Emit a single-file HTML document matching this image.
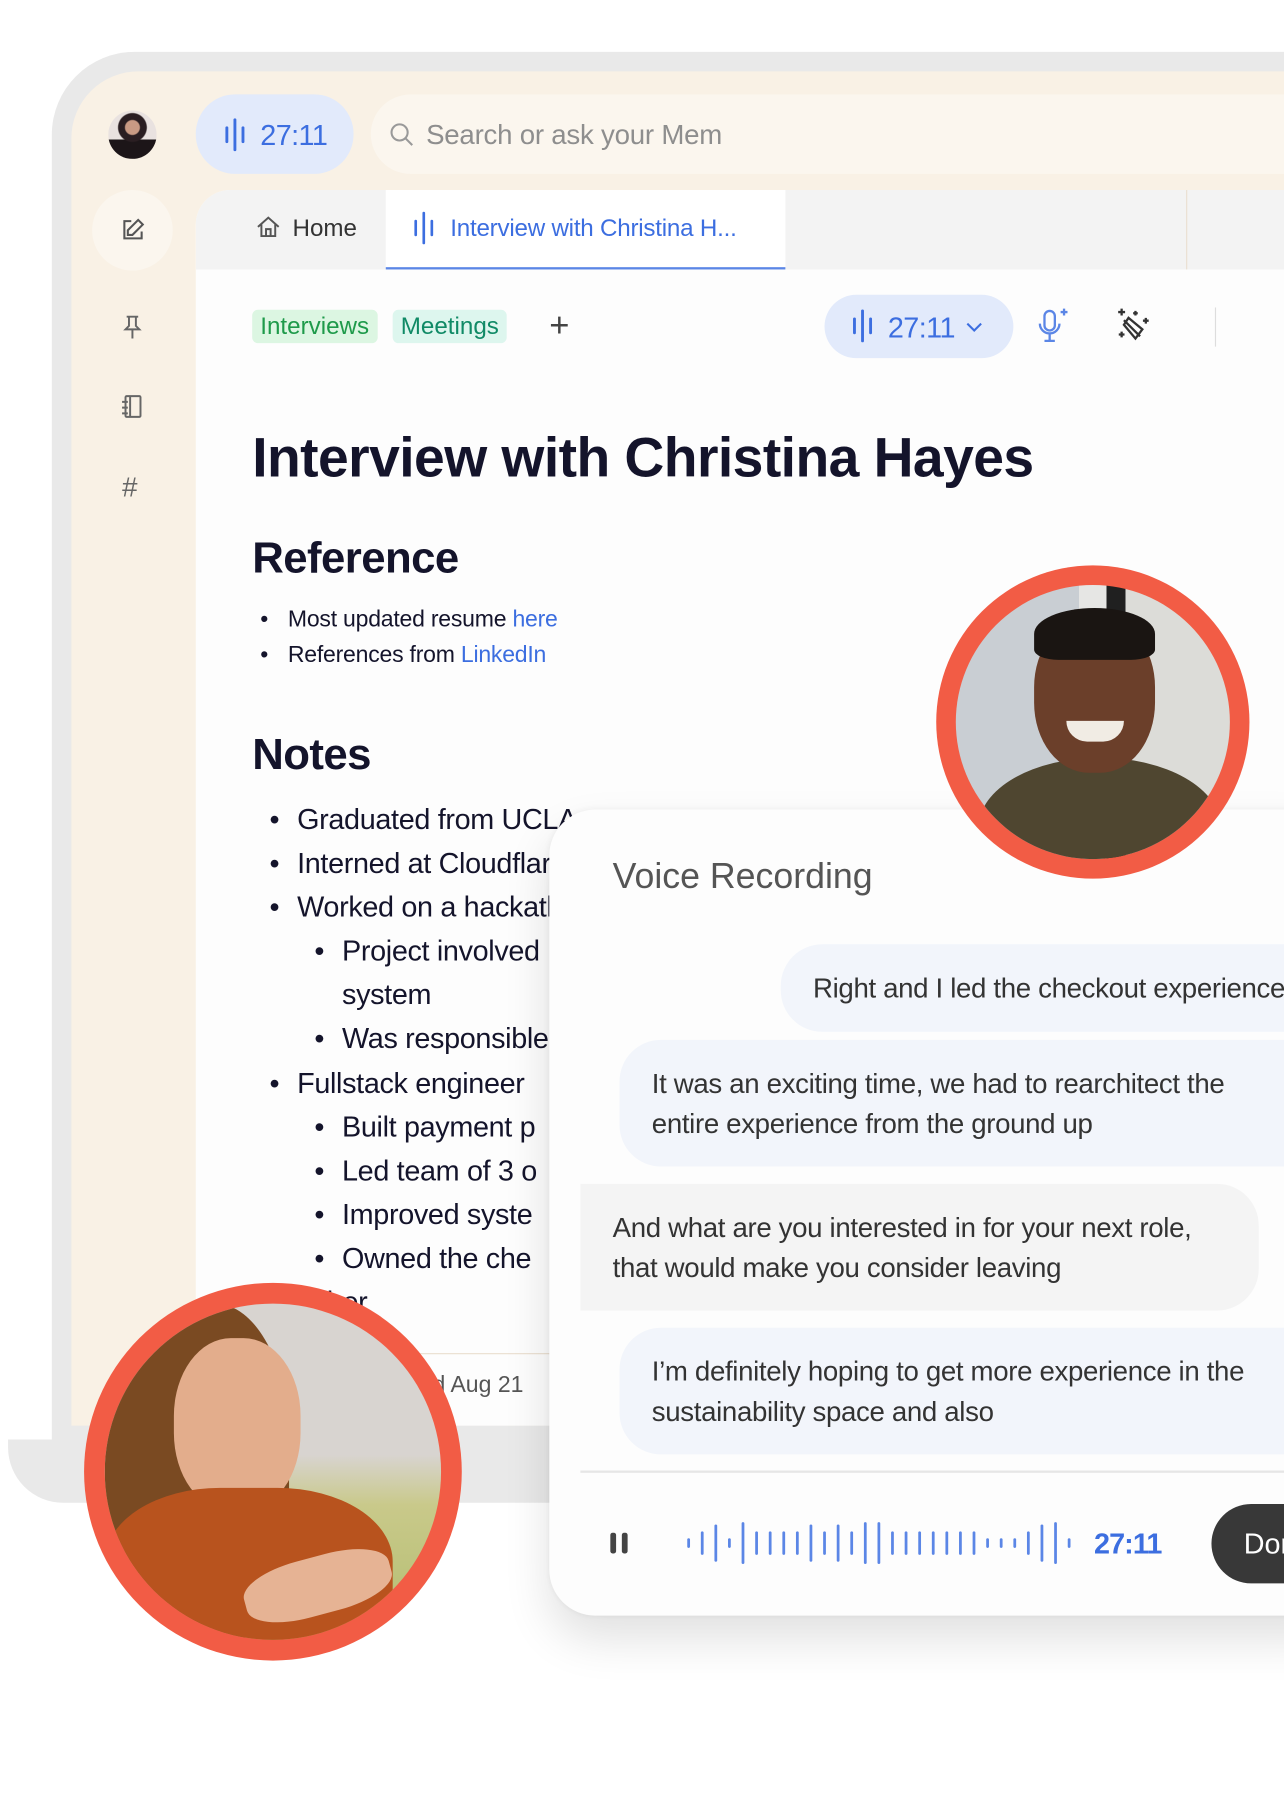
<!DOCTYPE html>
<html><head><meta charset="utf-8"><style>
*{box-sizing:border-box;margin:0;padding:0}
html,body{width:1284px;height:1806px;overflow:hidden;background:#fff}
body{font-family:"Liberation Sans",sans-serif}
#w{position:absolute;left:0;top:0;width:1115px;height:1568px;transform:scale(1.15157);transform-origin:0 0;overflow:hidden}
.a{position:absolute}
.t{white-space:nowrap;position:absolute}
.pill{background:#e2eafb;border-radius:34px}
.blue{color:#3c6ee0}
.b{position:absolute;white-space:nowrap;color:#14142b}
.b:before{content:"•";position:absolute;left:-24px}
.bub{position:absolute;border-radius:36px;font-size:24px;color:#333;line-height:35px;padding:21px 28px 19px;letter-spacing:-0.3px}
</style></head><body><div id="w">
<div class="a" style="left:45px;top:45px;width:1200px;height:1215px;background:#e9e9e9;border-radius:72px 0 0 0"></div>
<div class="a" style="left:7px;top:1250px;width:480px;height:55px;background:#e9e9e9;border-radius:0 0 0 48px"></div>
<div class="a" style="left:62px;top:62px;width:1200px;height:1176px;background:#f9f1e5;border-radius:58px 0 0 0"></div>
<div class="a" style="left:94px;top:96px;width:42px;height:42px;border-radius:50%;background:radial-gradient(circle at 50% 35%,#c99a84 0 6px,#2a1e22 7px 12px,transparent 13px),linear-gradient(#e9e2e0 60%,#1c1518 60%);"></div>
<div class="a pill" style="left:170px;top:82px;width:137px;height:69px"></div>
<svg class="a" style="left:194px;top:102px" width="22" height="30"><g stroke="#3c6ee0" stroke-width="2.5" stroke-linecap="round"><line x1="3" y1="9" x2="3" y2="21"/><line x1="10" y1="2" x2="10" y2="28"/><line x1="17" y1="9" x2="17" y2="21"/></g></svg>
<div class="t blue" style="left:226px;top:104px;font-size:25px;letter-spacing:-0.5px">27:11</div>
<div class="a" style="left:322px;top:82px;width:900px;height:69px;background:#fbf6ee;border-radius:35px"></div>
<svg class="a" style="left:338px;top:106px" width="22" height="22"><circle cx="9" cy="9" r="7" fill="none" stroke="#999" stroke-width="1.8"/><line x1="14" y1="14" x2="20" y2="20" stroke="#999" stroke-width="1.8"/></svg>
<div class="t" style="left:370px;top:104px;font-size:24px;color:#8e8e8e;letter-spacing:-0.2px">Search or ask your Mem</div>
<div class="a" style="left:80px;top:165px;width:70px;height:70px;border-radius:50%;background:#fbf6ee"></div>
<svg class="a" style="left:104px;top:189px" width="22" height="22" fill="none" stroke="#555" stroke-width="1.8"><path d="M10 3H4v15h15v-6"/><path d="M16 2l4 4-9 9H7v-4z"/></svg>
<svg class="a" style="left:105px;top:273px" width="20" height="22" fill="none" stroke="#666" stroke-width="1.7"><path d="M5 2h10M7 2v8l-3 3h12l-3-3V2M10 13v8"/></svg>
<svg class="a" style="left:104px;top:342px" width="22" height="22" fill="none" stroke="#666" stroke-width="1.7"><rect x="5" y="2" width="13" height="18" rx="1"/><path d="M9 2v18M2 7h5M2 12h5M2 17h5"/></svg>
<div class="t" style="left:106px;top:410px;font-size:24px;color:#666">#</div>
<div class="a" style="left:170px;top:165px;width:1000px;height:1073px;background:#fdfdfd;border-radius:30px 0 0 0;overflow:hidden">
 <div class="a" style="left:0;top:0;width:1000px;height:69px;background:#f3f3f3"></div>
 <div class="a" style="left:165px;top:0;width:347px;height:69px;background:#fff;border-bottom:2px solid #5b86e6"></div>
 <div class="a" style="left:860px;top:0;width:1px;height:69px;background:#eadfd0"></div>
</div>
<svg class="a" style="left:222px;top:187px" width="22" height="20" fill="none" stroke="#555" stroke-width="1.7"><path d="M2 10L11 2l9 8M5 8v10h12V8M9 18v-6h4v6"/></svg>
<div class="t" style="left:254px;top:187px;font-size:21px;color:#333">Home</div>
<svg class="a" style="left:358px;top:183px" width="22" height="30"><g stroke="#3c6ee0" stroke-width="2.3" stroke-linecap="round"><line x1="3" y1="9" x2="3" y2="21"/><line x1="10" y1="2" x2="10" y2="28"/><line x1="17" y1="9" x2="17" y2="21"/></g></svg>
<div class="t blue" style="left:391px;top:187px;font-size:21px;letter-spacing:-0.2px">Interview with Christina H...</div>
<div class="t" style="left:219px;top:269px;height:29px;padding:3px 7px;background:#dcf6e2;color:#1e9a4a;font-size:21px;border-radius:5px">Interviews</div>
<div class="t" style="left:341px;top:269px;height:29px;padding:3px 7px;background:#ddf6ee;color:#108a66;font-size:21px;border-radius:5px">Meetings</div>
<div class="t" style="left:477px;top:266px;font-size:30px;color:#444">+</div>
<div class="a pill" style="left:716px;top:256px;width:164px;height:55px"></div>
<svg class="a" style="left:739px;top:268px" width="22" height="30"><g stroke="#3c6ee0" stroke-width="2.5" stroke-linecap="round"><line x1="3" y1="9" x2="3" y2="21"/><line x1="10" y1="2" x2="10" y2="28"/><line x1="17" y1="9" x2="17" y2="21"/></g></svg>
<div class="t blue" style="left:771px;top:271px;font-size:25px;letter-spacing:-0.5px">27:11</div>
<svg class="a" style="left:838px;top:278px" width="16" height="12" fill="none" stroke="#3c6ee0" stroke-width="1.8"><path d="M2 3l6 6 6-6"/></svg>
<svg class="a" style="left:899px;top:266px" width="30" height="34" fill="none" stroke="#5b86e6" stroke-width="2"><rect x="8" y="4" width="9" height="17" rx="4.5"/><path d="M4 15a8.5 8.5 0 0 0 17 0M12.5 24v6M8 30h9M25 2v6M22 5h6"/></svg>
<svg class="a" style="left:968px;top:266px" width="34" height="34" fill="none" stroke="#333" stroke-width="2"><path d="M8 12l14 14M12 10l12 10-6 8-10-12z"/><path d="M6 2v6M3 5h6M18 4v4M16 6h4M27 10v5M24.5 12.5h5M6 22v5M3.5 24.5h5"/></svg>
<div class="a" style="left:1055px;top:267px;width:1px;height:34px;background:#ddd"></div>
<div class="t" style="left:219px;top:371px;font-size:48px;font-weight:bold;color:#14142b;letter-spacing:-0.5px">Interview with Christina Hayes</div>
<div class="t" style="left:219px;top:464px;font-size:38px;font-weight:bold;color:#14142b;letter-spacing:-0.5px">Reference</div>
<div style="font-size:20px;letter-spacing:-0.2px">
<div class="b" style="left:250px;top:527px;">Most updated resume <span class="blue">here</span></div>
<div class="b" style="left:250px;top:558px;">References from <span class="blue">LinkedIn</span></div>
</div>
<div class="t" style="left:219px;top:635px;font-size:38px;font-weight:bold;color:#14142b;letter-spacing:-0.5px">Notes</div>
<div style="font-size:25px;letter-spacing:-0.3px">
<div class="b" style="left:258px;top:698px">Graduated from UCLA</div>
<div class="b" style="left:258px;top:736px">Interned at Cloudflare</div>
<div class="b" style="left:258px;top:774px">Worked on a hackathon</div>
<div class="b" style="left:297px;top:812px">Project involved</div>
<div class="t" style="left:297px;top:850px;color:#14142b">system</div>
<div class="b" style="left:297px;top:888px">Was responsible</div>
<div class="b" style="left:258px;top:927px">Fullstack engineer</div>
<div class="b" style="left:297px;top:965px">Built payment p</div>
<div class="b" style="left:297px;top:1003px">Led team of 3 o</div>
<div class="b" style="left:297px;top:1041px">Improved syste</div>
<div class="b" style="left:297px;top:1079px">Owned the che</div>
<div class="t" style="left:258px;top:1117px;color:#14142b">Other</div>
</div>
<div class="a" style="left:219px;top:1175px;width:260px;height:1px;background:#eadfd0"></div>
<div class="t" style="left:330px;top:1192px;font-size:20px;color:#555">Edited Aug 21</div>
<div class="a" style="left:477px;top:703px;width:700px;height:700px;background:#fdfdfd;border-radius:40px;box-shadow:0 20px 40px rgba(0,0,0,.12),0 0 6px rgba(0,0,0,.06)"></div>
<div class="t" style="left:532px;top:743px;font-size:31px;color:#555">Voice Recording</div>
<div class="bub" style="left:678px;top:820px;width:500px;height:76px;background:#f2f5fb;white-space:nowrap">Right and I led the checkout experience</div>
<div class="bub" style="left:538px;top:903px;width:640px;height:110px;background:#f2f5fb;padding-right:80px">It was an exciting time, we had to rearchitect the entire experience from the ground up</div>
<div class="bub" style="left:504px;top:1028px;width:589px;height:110px;background:#f4f4f4;border-radius:0 36px 36px 0">And what are you interested in for your next role, that would make you consider leaving</div>
<div class="bub" style="left:538px;top:1153px;width:640px;height:110px;background:#f2f5fb;white-space:nowrap">I’m definitely hoping to get more experience in the<br>sustainability space and also</div>
<div class="a" style="left:504px;top:1277px;width:620px;height:2px;background:#e6e6e6"></div>
<div class="a" style="left:530px;top:1331px;width:5px;height:18px;background:#444;border-radius:2px"></div>
<div class="a" style="left:540px;top:1331px;width:5px;height:18px;background:#444;border-radius:2px"></div>
<svg class="a" style="left:595px;top:1320px" width="345" height="40"><g stroke="#5b86e6" stroke-width="2.4" stroke-linecap="round" id="wv"></g></svg>
<div class="t" style="left:950px;top:1327px;font-size:25px;font-weight:bold;color:#3c6ee0;letter-spacing:-0.8px">27:11</div>
<div class="a" style="left:1052px;top:1306px;width:120px;height:69px;background:#383838;border-radius:35px"></div>
<div class="t" style="left:1080px;top:1327px;font-size:25px;color:#fff">Done</div>
<div class="a" style="left:813px;top:491px;width:272px;height:272px;border-radius:50%;background:#f25c45;padding:17px">
 <div style="width:100%;height:100%;border-radius:50%;overflow:hidden;position:relative;background:linear-gradient(90deg,#c9ced3 0 45%,#e6e6e4 45% 55%,#202020 55% 62%,#dcdcd8 62%)">
  <div class="a" style="left:20px;top:150px;width:210px;height:120px;border-radius:50% 50% 0 0;background:#4f4630"></div>
  <div class="a" style="left:68px;top:28px;width:105px;height:135px;border-radius:45%;background:#6b3f2a"></div>
  <div class="a" style="left:68px;top:20px;width:105px;height:45px;border-radius:50% 50% 20% 20%;background:#1a1512"></div>
  <div class="a" style="left:96px;top:118px;width:50px;height:18px;border-radius:0 0 25px 25px;background:#f1ece4"></div>
 </div>
</div>
<div class="a" style="left:73px;top:1114px;width:328px;height:328px;border-radius:50%;background:#f25c45;padding:18px">
 <div style="width:100%;height:100%;border-radius:50%;overflow:hidden;position:relative;background:linear-gradient(180deg,#d8d4d0 0 45%,#c9c98a 60%,#b2bd70)">
  <div class="a" style="left:0;top:0;width:160px;height:300px;background:#7a4a22;border-radius:0 40% 40% 0"></div>
  <div class="a" style="left:60px;top:30px;width:110px;height:150px;border-radius:45%;background:#e3ad8c"></div>
  <div class="a" style="left:0;top:160px;width:250px;height:160px;border-radius:40% 40% 0 0;background:#b8531e"></div>
  <div class="a" style="left:120px;top:220px;width:130px;height:50px;border-radius:40%;background:#e6b394;transform:rotate(-15deg)"></div>
 </div>
</div>
</div>
<script>
var h=[6,18,30,6,34,18,18,18,18,30,18,30,18,34,34,18,18,18,18,18,18,18,6,6,6,18,30,34,6];
var g=document.getElementById('wv'),x=3,s='';
h.forEach(function(v){s+='<line x1="'+x+'" y1="'+(20-v/2)+'" x2="'+x+'" y2="'+(20+v/2)+'"/>';x+=11.8;});
g.innerHTML=s;
</script>
</body></html>
